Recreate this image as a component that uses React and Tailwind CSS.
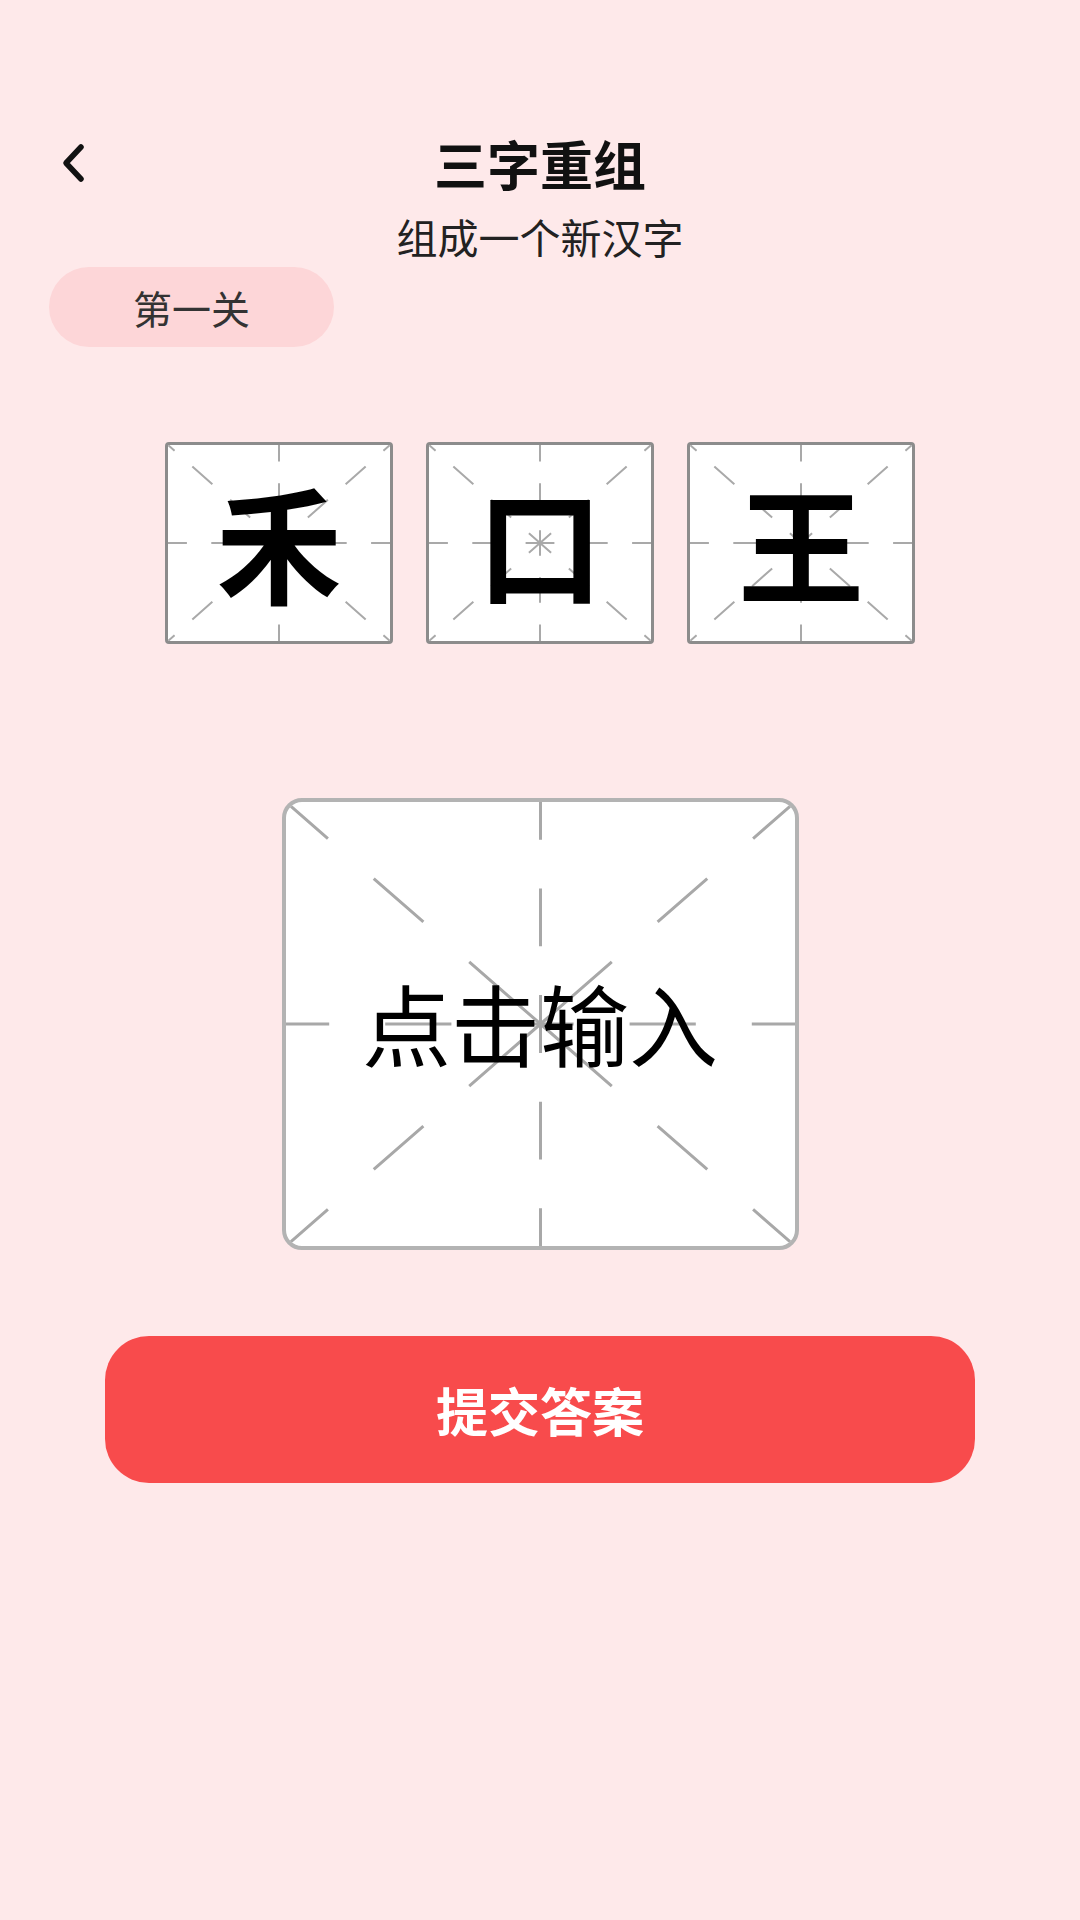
import React from 'react'

const CJK = { fontFamily: '"Noto Sans CJK SC", "Noto Sans", sans-serif' }

// dash patterns are fractions of the half-line, starting from the centre
const STRAIGHT = [0.13, 0.22, 0.26, 0.22, 0.6]
const SMALL_DIAG = [0.1, 0.16, 0.18, 0.16, 0.18, 0.16, 0.6]
const BIG_DIAG = [0.28, 0.18, 0.195, 0.18, 0.6]

function HalfLine({ cx, cy, x, y, pattern, color, width }) {
  const half = Math.hypot(x - cx, y - cy)
  return (
    <line x1={cx} y1={cy} x2={x} y2={y} stroke={color} strokeWidth={width}
      strokeDasharray={pattern.map(f => (f * half).toFixed(1)).join(' ')} />
  )
}

function Grid({ w, h, diag, color, width }) {
  const cx = w / 2
  const cy = h / 2
  const straight = [[cx, 0], [cx, h], [0, cy], [w, cy]]
  const corners = [[0, 0], [w, 0], [0, h], [w, h]]
  return (
    <svg className="absolute inset-0" width={w} height={h} viewBox={`0 0 ${w} ${h}`}>
      {straight.map(([x, y], i) => (
        <HalfLine key={'s' + i} cx={cx} cy={cy} x={x} y={y} pattern={STRAIGHT} color={color} width={width} />
      ))}
      {corners.map(([x, y], i) => (
        <HalfLine key={'d' + i} cx={cx} cy={cy} x={x} y={y} pattern={diag} color={color} width={width} />
      ))}
    </svg>
  )
}

function CharBox({ ch }) {
  return (
    <div className="relative w-[228px] h-[202px] bg-white border-[3px] border-[#8c8c8c] rounded-[4px] overflow-hidden">
      <Grid w={222} h={196} diag={SMALL_DIAG} color="#a9a9a9" width={2} />
      <div className="relative h-full pb-[6px] flex items-center justify-center text-[126px] font-bold leading-none text-black" style={CJK}>
        {ch}
      </div>
    </div>
  )
}

export default function App() {
  return (
    <div className="w-full min-h-[1920px] bg-[#fee9ea] flex flex-col" style={CJK}>
      {/* header */}
      <div className="mt-[118px] h-[90px] grid grid-cols-[1fr_auto_1fr] items-center">
        <div className="pl-[60px] flex items-center">
          <svg width="28" height="40" viewBox="0 0 28 40">
            <path d="M21 4 L6 20 L21 36" fill="none" stroke="#111" strokeWidth="5.5" strokeLinecap="round" strokeLinejoin="round" />
          </svg>
        </div>
        <h1 className="text-[53px] font-bold leading-none text-[#111]">三字重组</h1>
        <div />
      </div>
      <p className="h-[56px] leading-[56px] text-center text-[41px] text-[#222]">组成一个新汉字</p>

      <div className="mt-[3px] ml-[49px] w-[285px] h-[80px] rounded-full bg-[#fdd6d8] flex items-center justify-center text-[39px] text-[#333]">
        第一关
      </div>

      {/* three source characters */}
      <div className="mt-[95px] flex justify-center gap-[33px]">
        <CharBox ch="禾" />
        <CharBox ch="口" />
        <CharBox ch="王" />
      </div>

      {/* answer box */}
      <div className="mt-[154px] mx-auto relative w-[517px] h-[452px] bg-white border-4 border-[#b3b3b3] rounded-[20px] overflow-hidden">
        <Grid w={509} h={444} diag={BIG_DIAG} color="#a8a8a8" width={3} />
        <div className="relative h-full pb-[6px] flex items-center justify-center text-[89px] leading-none text-black">
          点击输入
        </div>
      </div>

      <button className="mt-[86px] mx-auto w-[870px] h-[147px] rounded-[44px] bg-[#f84b4c] text-white text-[52px] font-bold">
        提交答案
      </button>
    </div>
  )
}
